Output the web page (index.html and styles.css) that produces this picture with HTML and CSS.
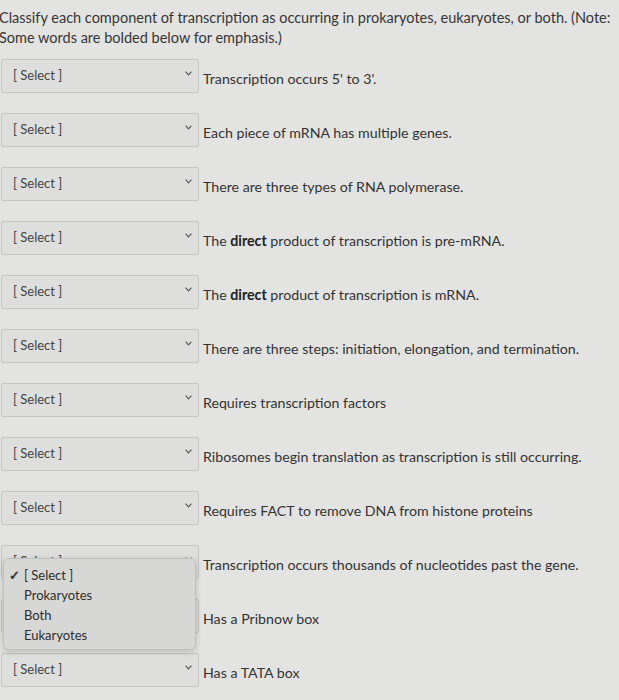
FILE: index.html
```html
<!DOCTYPE html>
<html lang="en">
<head>
    <meta charset="UTF-8">
    <meta name="viewport" content="width=device-width, initial-scale=1.0">
    <title>Classify components of transcription</title>
    <link rel="stylesheet" href="styles.css">
</head>
<body>
    <div class="question">
        <p class="prompt">Classify each component of transcription as occurring in prokaryotes, eukaryotes, or both. (Note: Some words are bolded below for emphasis.)</p>

        <div class="answers">
            <div class="answer-row">
                <div class="select-box"><span>[ Select ]</span><svg class="chevron" viewBox="0 0 7 5"><path d="M0.6 0.6 L3.5 3.8 L6.4 0.6"/></svg></div>
                <div class="statement">Transcription occurs 5' to 3'.</div>
            </div>
            <div class="answer-row">
                <div class="select-box"><span>[ Select ]</span><svg class="chevron" viewBox="0 0 7 5"><path d="M0.6 0.6 L3.5 3.8 L6.4 0.6"/></svg></div>
                <div class="statement">Each piece of mRNA has multiple genes.</div>
            </div>
            <div class="answer-row">
                <div class="select-box"><span>[ Select ]</span><svg class="chevron" viewBox="0 0 7 5"><path d="M0.6 0.6 L3.5 3.8 L6.4 0.6"/></svg></div>
                <div class="statement">There are three types of RNA polymerase.</div>
            </div>
            <div class="answer-row">
                <div class="select-box"><span>[ Select ]</span><svg class="chevron" viewBox="0 0 7 5"><path d="M0.6 0.6 L3.5 3.8 L6.4 0.6"/></svg></div>
                <div class="statement">The <b>direct</b> product of transcription is pre-mRNA.</div>
            </div>
            <div class="answer-row">
                <div class="select-box"><span>[ Select ]</span><svg class="chevron" viewBox="0 0 7 5"><path d="M0.6 0.6 L3.5 3.8 L6.4 0.6"/></svg></div>
                <div class="statement">The <b>direct</b> product of transcription is mRNA.</div>
            </div>
            <div class="answer-row">
                <div class="select-box"><span>[ Select ]</span><svg class="chevron" viewBox="0 0 7 5"><path d="M0.6 0.6 L3.5 3.8 L6.4 0.6"/></svg></div>
                <div class="statement">There are three steps: initiation, elongation, and termination.</div>
            </div>
            <div class="answer-row">
                <div class="select-box"><span>[ Select ]</span><svg class="chevron" viewBox="0 0 7 5"><path d="M0.6 0.6 L3.5 3.8 L6.4 0.6"/></svg></div>
                <div class="statement">Requires transcription factors</div>
            </div>
            <div class="answer-row">
                <div class="select-box"><span>[ Select ]</span><svg class="chevron" viewBox="0 0 7 5"><path d="M0.6 0.6 L3.5 3.8 L6.4 0.6"/></svg></div>
                <div class="statement">Ribosomes begin translation as transcription is still occurring.</div>
            </div>
            <div class="answer-row">
                <div class="select-box"><span>[ Select ]</span><svg class="chevron" viewBox="0 0 7 5"><path d="M0.6 0.6 L3.5 3.8 L6.4 0.6"/></svg></div>
                <div class="statement">Requires FACT to remove DNA from histone proteins</div>
            </div>
            <div class="answer-row">
                <div class="select-box open">
                    <span>[ Select ]</span><svg class="chevron" viewBox="0 0 7 5"><path d="M0.6 0.6 L3.5 3.8 L6.4 0.6"/></svg>
                    <!-- open dropdown -->
                    <ul class="options">
                        <li class="checked"><span class="check">&#10003;</span>[ Select ]</li>
                        <li>Prokaryotes</li>
                        <li>Both</li>
                        <li>Eukaryotes</li>
                    </ul>
                </div>
                <div class="statement">Transcription occurs thousands of nucleotides past the gene.</div>
            </div>
            <div class="answer-row">
                <div class="select-box"><span class="covered">[ Select ]</span><svg class="chevron" viewBox="0 0 7 5"><path d="M0.6 0.6 L3.5 3.8 L6.4 0.6"/></svg></div>
                <div class="statement">Has a Pribnow box</div>
            </div>
            <div class="answer-row">
                <div class="select-box"><span>[ Select ]</span><svg class="chevron" viewBox="0 0 7 5"><path d="M0.6 0.6 L3.5 3.8 L6.4 0.6"/></svg></div>
                <div class="statement">Has a TATA box</div>
            </div>
        </div>
    </div>
</body>
</html>
```

FILE: styles.css
```css
body {
    font-family: Lato, "Open Sans", Arial, sans-serif;
    background-color: #e3e3e1;
    color: #363636;
    margin: 0;
    height: 100vh;
    overflow: hidden;
}
.prompt {
    font-size: 14.5px;
    line-height: 20px;
    margin: 8px 0 0 -1px;
}
.answers {
    display: flex;
    flex-direction: column;
    gap: 20px;
    margin-top: 11px;
}
.answer-row {
    display: flex;
    align-items: center;
    padding-left: 1px;
}
.select-box {
    position: relative;
    display: flex;
    align-items: center;
    justify-content: space-between;
    box-sizing: border-box;
    width: 198px;
    height: 34px;
    padding: 0 6px 2px 11px;
    background-color: #dededc;
    border: 1px solid #c4c4c2;
    border-radius: 2px;
    font-size: 13px;
    color: #444;
    flex-shrink: 0;
}
.covered {
    visibility: hidden;
}
.chevron {
    width: 7px;
    height: 5px;
    margin-bottom: 3px;
    fill: none;
    stroke: #5a5a5a;
    stroke-width: 1.2;
}
.statement {
    font-size: 14.2px;
    margin-left: 4px;
    padding-top: 4px;
    color: #333;
}
.statement b {
    font-weight: bold;
    color: #222;
}
.options {
    position: absolute;
    top: 12px;
    left: 1px;
    width: 191px;
    margin: 0;
    padding: 6px 0 4px 0;
    list-style: none;
    background-color: #d7d7d5;
    border: 1px solid #c0c0be;
    border-radius: 6px;
    box-shadow: 0 2px 6px rgba(0, 0, 0, 0.18);
    font-size: 13px;
    color: #2e2e2e;
    z-index: 2;
}
.options li {
    height: 20px;
    line-height: 20px;
    padding-left: 20px;
    position: relative;
}
.options .check {
    position: absolute;
    left: 5px;
    top: 0;
    font-size: 13px;
    font-weight: bold;
    color: #333;
}
```
